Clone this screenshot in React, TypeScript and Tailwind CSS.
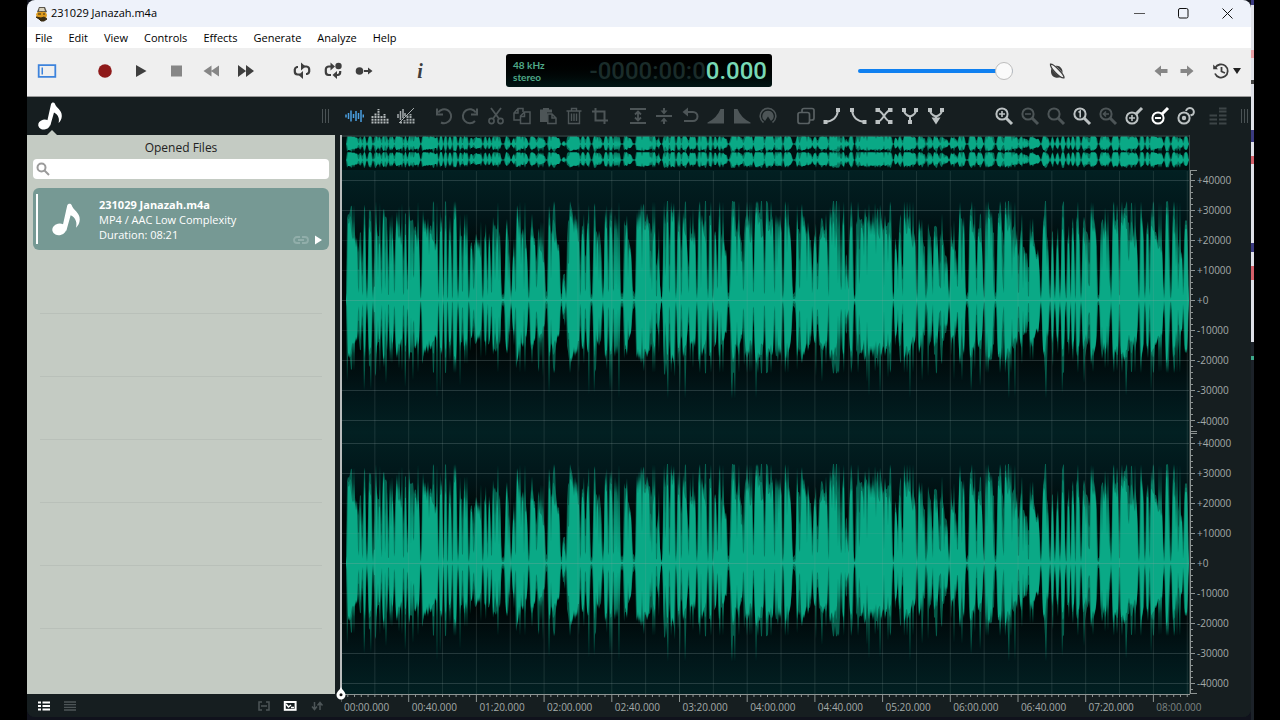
import React from 'react';
import clsx from 'clsx';

const MENU = ['File', 'Edit', 'View', 'Controls', 'Effects', 'Generate', 'Analyze', 'Help'];
const LEVELS = ['+40000', '+30000', '+20000', '+10000', '+0', '-10000', '-20000', '-30000', '-40000'];
const TIMES = [
  '00:00.000', '00:40.000', '01:20.000', '02:00.000', '02:40.000', '03:20.000', '04:00.000',
  '04:40.000', '05:20.000', '06:00.000', '06:40.000', '07:20.000', '08:00.000',
];

const PLOT_WIDTH = 849;
const MAJOR_STEP = 67.7;

// Phrases of speech: start, length, level at the start, level at the end (thousands)
const BURSTS: number[][] = [
  [6, 11, 31, 22], [18, 3, 22, 14], [22, 3, 30, 26], [27, 4, 27, 24], [33, 7, 31, 20], [41, 6, 30, 28],
  [48, 5, 28, 20], [54, 8, 30, 22], [63, 3, 28, 22], [67, 12, 33, 20], [81, 16, 31, 20], [99, 2, 28, 27],
  [103, 3, 30, 29], [108, 2, 26, 20], [112, 4, 33, 31], [118, 3, 28, 24], [122, 5, 27, 22], [129, 3, 24, 18],
  [133, 8, 25, 16], [143, 3, 24, 20], [147, 3, 24, 20], [151, 9, 32, 20], [164, 5, 31, 20], [171, 3, 20, 16],
  [175, 12, 31, 18], [189, 6, 28, 18], [196, 8, 24, 12], [207, 12, 30, 18], [222, 2, 8, 4], [226, 13, 33, 24],
  [240, 4, 28, 20], [245, 4, 29, 22], [252, 9, 30, 20], [263, 4, 29, 26], [268, 4, 28, 24], [273, 6, 32, 22],
  [283, 8, 33, 16], [295, 20, 32, 24], [316, 3, 22, 8], [322, 6, 33, 26], [329, 5, 33, 30], [336, 4, 28, 24],
  [341, 6, 31, 20], [348, 7, 28, 22], [357, 9, 31, 22], [368, 3, 33, 30], [373, 3, 24, 20], [377, 9, 30, 16],
  [389, 13, 32, 22], [403, 9, 32, 22], [413, 10, 33, 24], [424, 9, 32, 26], [434, 7, 28, 26], [443, 8, 33, 22],
  [455, 3, 29, 28], [459, 12, 32, 22], [472, 4, 25, 18], [477, 10, 26, 24], [488, 12, 33, 24], [501, 3, 33, 28],
  [504, 3, 14, 8], [508, 4, 30, 28], [515, 36, 30, 26], [554, 2, 20, 16], [557, 4, 26, 12], [562, 13, 33, 20],
  [577, 7, 27, 20], [586, 5, 32, 18], [592, 6, 24, 18], [599, 8, 26, 12], [609, 7, 24, 16], [617, 7, 32, 28],
  [628, 7, 30, 24], [636, 6, 27, 22], [644, 9, 33, 26], [656, 6, 32, 28], [663, 14, 32, 22], [678, 9, 26, 16],
  [688, 11, 26, 14], [701, 7, 32, 18], [710, 3, 22, 20], [715, 3, 24, 20], [720, 4, 31, 24], [726, 3, 24, 20],
  [731, 2, 26, 24], [735, 4, 30, 28], [741, 7, 26, 22], [749, 7, 32, 24], [759, 10, 30, 22], [771, 7, 32, 28],
  [779, 18, 32, 20], [799, 4, 31, 26], [805, 3, 26, 24], [809, 13, 30, 18], [824, 5, 32, 30], [831, 11, 30, 14],
  [843, 4, 33, 28],
];

interface Layers {
  peak: number[][];
  mid: number[][];
  body: number[][];
}

function buildLayers(seed: number): Layers {
  let state = seed;
  const random = () => {
    state = (state * 1664525 + 1013904223) % 4294967296;
    return state / 4294967296;
  };
  const layers: Layers = { peak: [], mid: [], body: [] };
  for (let x = 5; x < PLOT_WIDTH; x++) {
    const hum = 0.4 + random() * 1.2;
    layers.peak.push([x, hum * 2, hum * 2]);
    layers.mid.push([x, hum, hum]);
    layers.body.push([x, 0.3, 0.3]);
  }
  BURSTS.forEach(([start, length, from, to]) => {
    const tall = Math.floor(random() * Math.min(length, 5));
    for (let i = 0; i <= length; i++) {
      const index = start + i - 5;
      if (index >= layers.peak.length) continue;
      const level = from + ((to - from) * i) / length;
      const edge = length > 2 && (i === 0 || i === length);
      const slit = length > 4 && !edge && random() < 0.2;
      const spike = i === tall || random() < 0.3;
      let body = level * (0.74 + random() * 0.22);
      let peak = Math.min(33, spike ? from * (1 + random() * 0.12) : body * 1.12);
      if (slit) {
        body = 3 + random() * level * 0.5;
        peak = level * (0.8 + random() * 0.2);
      }
      if (edge) {
        body = 1 + random() * 4;
        peak = level * (0.35 + random() * 0.55);
      }
      const mid = (peak + body) / 2;
      const dip = spike && random() < 0.25 ? 1.35 : 1;
      const x = start + i;
      layers.peak[index] = [x, peak, Math.min(33, peak * (spike ? 0.74 : 0.66) * dip)];
      layers.mid[index] = [x, mid, mid * 0.68];
      layers.body[index] = [x, body, body * (slit || edge ? 0.9 : 0.7)];
    }
  });
  return layers;
}

function toPath(points: number[][], center: number, scale: number, limit = 40) {
  const top = points.map(([x, up]) => `${x} ${(center - Math.min(up, limit) * scale).toFixed(1)}`);
  const bottom = points.map(([x, , down]) => `${x} ${(center + Math.min(down, limit) * scale).toFixed(1)}`);
  return `M${top.join('L')}L${bottom.reverse().join('L')}Z`;
}

const LAYERS = buildLayers(11);
const CHANNELS = [
  { top: 35, center: 165 },
  { top: 297, center: 428 },
];

const Waveform: React.FC = () => (
  <svg className="block h-full w-full" viewBox="0 0 849 559" preserveAspectRatio="none" aria-label="Waveform">
    <defs>
      <linearGradient id="channel" x1="0" y1="0" x2="0" y2="1">
        <stop offset="0" stopColor="#022022" />
        <stop offset="0.16" stopColor="#01171a" />
        <stop offset="0.32" stopColor="#000707" />
        <stop offset="0.68" stopColor="#000707" />
        <stop offset="0.84" stopColor="#011518" />
        <stop offset="1" stopColor="#022022" />
      </linearGradient>
    </defs>
    <rect width="849" height="559" fill="#000f10" />
    {CHANNELS.map(({ top, center }) => (
      <g key={top}>
        <rect y={top} width="849" height="262" fill="url(#channel)" />
        <path d={toPath(LAYERS.peak, center, 3)} fill="#0aa986" opacity="0.5" />
        <path d={toPath(LAYERS.mid, center, 3)} fill="#0aa986" opacity="0.45" />
        <path d={toPath(LAYERS.body, center, 3)} fill="#0aa986" />
        {LEVELS.map((level, i) => (
          <path key={level} d={`M0 ${center - 120 + i * 30 + 0.5}H849`} stroke="#8fa5a3" strokeOpacity={i === 4 ? 0.3 : i < 2 || i > 5 ? 0.25 : 0.12} />
        ))}
      </g>
    ))}
    {Array.from({ length: 25 }, (_, i) => (
      <path key={i} d={`M${(i + 1) * (MAJOR_STEP / 2)} 36V559`} stroke="#8fa5a3" strokeOpacity="0.18" />
    ))}
    {/* overview strip of both channels */}
    {[9, 25].map((center) => (
      <g key={center} fill="#0aa986">
        <path d={toPath(LAYERS.peak, center, 0.32, 24)} opacity="0.65" />
        <path d={toPath(LAYERS.body, center, 0.34, 22)} />
      </g>
    ))}
    <path d="M0 1H849" stroke="#4a5756" />
    <path d="M848.5 0V559" stroke="#3b4847" />
  </svg>
);

const LevelAxis: React.FC = () => (
  <div className="flex w-[61px] shrink-0 bg-[#161e20]">
    <svg className="h-full w-[7px] shrink-0" viewBox="0 0 7 559" preserveAspectRatio="none" stroke="#8d9493">
      <path d="M.5 35V559" />
      <path d="M0 35.5H7M0 296.5H7M0 298.5H7M0 558.5H7" />
      {CHANNELS.map(({ center }) =>
        Array.from({ length: 43 }, (_, i) => (
          <path key={`${center}-${i}`} d={`M0 ${center - 126 + i * 6 + 0.5}H${(i - 1) % 5 === 0 ? 5 : 3}`} />
        )),
      )}
    </svg>
    <div className="flex flex-1 flex-col pt-[34px]">
      {CHANNELS.map(({ top }) => (
        <div key={top} className="-my-1 flex flex-1 flex-col text-[10px] text-[#a3aaa9]">
          {LEVELS.map((level) => (
            <span key={level} className="flex flex-1 items-center leading-none">{level}</span>
          ))}
        </div>
      ))}
    </div>
  </div>
);

const TimeAxis: React.FC = () => (
  <div className="flex h-[23px] shrink-0 bg-[#161e20] pl-[6px] pr-[61px]">
    <div className="flex flex-1 flex-col">
      <svg className="block h-[8px] w-full" viewBox="0 0 849 8" preserveAspectRatio="none" stroke="#8d9493">
        <path d="M0 .5H849" />
        {Array.from({ length: 126 }, (_, i) => (
          <path key={i} d={`M${(i * MAJOR_STEP) / 10} 0V${i % 10 === 0 ? 8 : 3}`} />
        ))}
      </svg>
      <div className="flex text-[10px] leading-[10px] text-[#a3aaa9]">
        {TIMES.map((time, i) => (
          <span
            key={time}
            className={clsx('shrink-0 pl-[3px] whitespace-nowrap', i === 12 && 'text-[#7d8584]')}
            style={{ width: `${(MAJOR_STEP / PLOT_WIDTH) * 100}%` }}
          >
            {time}
          </span>
        ))}
      </div>
    </div>
  </div>
);

interface ToolProps {
  label: string;
  className?: string;
  children: React.ReactNode;
}

// Editing tools are all drawn on a 20x20 grid
const Tool: React.FC<ToolProps> = ({ label, className = 'text-[#4d5557]', children }) => (
  <button type="button" aria-label={label} className={clsx('flex h-full w-[26px] shrink-0 items-center justify-center', className)}>
    <svg className="h-5 w-5" viewBox="0 0 20 20" fill="none" stroke="currentColor" strokeWidth="2">
      {children}
    </svg>
  </button>
);

const Transport: React.FC<ToolProps> = ({ label, className = 'text-[#3e3e3e]', children }) => (
  <button type="button" aria-label={label} className={clsx('flex h-8 shrink-0 items-center justify-center', className)}>
    <svg className="h-5 w-5" viewBox="0 0 20 20" fill="currentColor">
      {children}
    </svg>
  </button>
);

const Lens: React.FC = () => (
  <>
    <circle cx="8" cy="8" r="5.6" />
    <path d="M12 12L18 18" strokeWidth="3" />
  </>
);

const Note: React.FC<{ className: string }> = ({ className }) => (
  <svg className={className} viewBox="0 0 24 28" fill="currentColor">
    <ellipse cx="6.2" cy="22.5" rx="6" ry="5" transform="rotate(-14 6.2 22.5)" />
    <path d="M8.600 22L13 2.200C13.600 .2 16 .1 16.800 1.600C18 6 24 8 23.800 14C23.700 17 22.400 19.400 20.600 21C21.600 17 20.600 12.600 16 10.400L12.300 23.600Z" />
  </svg>
);

const Grip: React.FC = () => (
  <svg className="h-[14px] w-[9px] shrink-0" viewBox="0 0 9 14" stroke="#4a5254">
    <path d="M1.5 0V14M4.5 0V14M7.5 0V14" />
  </svg>
);

const TitleBar: React.FC = () => (
  <header className="flex h-[27px] shrink-0 items-center bg-[#eef2fa] pl-2 text-black">
    <svg className="h-4 w-[13px]" viewBox="0 0 13 16">
      <path d="M2 6L4 1H10L12 6L9 7H4Z" fill="#5b564b" />
      <path d="M4.5 2H9L10 5H4Z" fill="#d9d2bd" />
      <path d="M1 8Q3 5 6.500 6Q11 5 12 9L11 13L7 14L2 12Z" fill="#dd9a1c" />
      <path d="M3 8H6M8 8H10M1 11L4 13L6 15H9L12 13L9 11L6 12Z" stroke="#3a2c12" fill="#3a2c12" />
    </svg>
    <h1 className="pl-[3px] text-[11px]">231029 Janazah.m4a</h1>
    <div className="ml-auto flex h-full pr-[2px]">
      <button type="button" aria-label="Minimize" className="flex w-11 items-center justify-center">
        <svg className="h-[11px] w-[11px]" viewBox="0 0 11 11" stroke="#555"><path d="M0 5.5H11" /></svg>
      </button>
      <button type="button" aria-label="Maximize" className="flex w-11 items-center justify-center">
        <svg className="h-[11px] w-[11px]" viewBox="0 0 11 11" fill="none" stroke="#111"><rect x=".5" y=".5" width="9.500" height="9.500" rx="1.500" /></svg>
      </button>
      <button type="button" aria-label="Close" className="flex w-11 items-center justify-center">
        <svg className="h-[11px] w-[11px]" viewBox="0 0 11 11" stroke="#111"><path d="M.5 .5L10.500 10.500M10.500 .5L.5 10.500" /></svg>
      </button>
    </div>
  </header>
);

const PlaybackBar: React.FC = () => (
  <div className="grid h-[49px] shrink-0 grid-cols-[1fr_auto_1fr] items-center border-b border-[#9a9a9a] bg-[#efefef] pb-[3px]">
    <div className="flex items-center pl-[10px]">
      <Transport label="Toggle side panel" className="mr-[38px] text-[#3d83dc]">
        <path d="M1.700 4.200H18.300V15.800H1.700Z" fill="none" stroke="currentColor" strokeWidth="1.800" />
        <path d="M4.500 6.500H6V13.500H4.500Z" />
      </Transport>
      <div className="flex gap-[15px]">
        <Transport label="Record" className="text-[#8f1a1a]"><circle cx="10" cy="10" r="6.800" /></Transport>
        <Transport label="Play"><path d="M6 4L16.500 10L6 16Z" /></Transport>
        <Transport label="Stop" className="text-[#868686]"><path d="M6 4.500H17V15.500H6Z" /></Transport>
        <Transport label="Rewind" className="text-[#868686]"><path d="M11.500 4.500V15.500L3.500 10ZM19 4.500V15.500L11 10Z" /></Transport>
        <Transport label="Fast forward"><path d="M3 4V16L11 10ZM11 4V16L19 10Z" /></Transport>
      </div>
      <div className="ml-[37px] flex gap-[11px]">
        <Transport label="Loop">
          <path d="M6 6.500H5A3 3 0 0 0 2.800 9V11A3 3 0 0 0 5.500 14H8M14 13.500H15A3 3 0 0 0 17.200 11V9A3 3 0 0 0 14.500 6H11" fill="none" stroke="currentColor" strokeWidth="2.200" transform="translate(0 -.5)" />
          <path d="M11 1.500L6.500 5.500L11 9.500ZM9 10L13.500 14L9 18Z" transform="matrix(-1 0 0 1 20 0)" />
        </Transport>
        <Transport label="Loop selection">
          <path d="M9 5.500H6A3 3 0 0 0 2.800 8.500V11A3 3 0 0 0 5.500 14H8M14 14H15A3 3 0 0 0 17.200 11V10" fill="none" stroke="currentColor" strokeWidth="2.200" />
          <path d="M7.500 1.500L12 5.500L7.500 9.500ZM14 10L9.500 14L14 18Z" />
          <circle cx="15.500" cy="5" r="3.200" />
        </Transport>
        <Transport label="Play from cursor">
          <circle cx="5.500" cy="10" r="3.800" />
          <path d="M10 9H14V6.500L18.500 10L14 13.500V11H10Z" />
        </Transport>
      </div>
      <button type="button" aria-label="File information" className="ml-9 w-5 font-['Liberation_Serif',serif] text-[20px] leading-5 font-bold text-[#3e3e3e] italic">i</button>
    </div>
    <div className="flex h-[33px] w-[266px] items-center justify-between rounded-[3px] bg-linear-to-b from-black to-[#011514] pr-[5px] pl-[7px]">
      <div className="flex flex-col font-[Lato,sans-serif] text-[10px] leading-[12px] font-bold text-[#4fa988]">
        <span>48 kHz</span>
        <span>stereo</span>
      </div>
      <div className="font-[Roboto,sans-serif] text-[24px] leading-6 font-medium text-[#1a2c2a]">
        -0000:00:0<span className="text-[#78d8b5]">0.000</span>
      </div>
    </div>
    <div className="flex items-center pl-[86px] pr-[10px]">
      <input
        type="range"
        aria-label="Volume"
        defaultValue={100}
        className="h-[4px] w-[155px] appearance-none rounded-full bg-[#0f80f0] [&::-webkit-slider-thumb]:h-[18px] [&::-webkit-slider-thumb]:w-[18px] [&::-webkit-slider-thumb]:appearance-none [&::-webkit-slider-thumb]:rounded-full [&::-webkit-slider-thumb]:border [&::-webkit-slider-thumb]:border-[#bdbdbd] [&::-webkit-slider-thumb]:bg-[#fafafa]"
      />
      <div className="pl-[34px]">
        <Transport label="Audio unit">
          <path d="M3.500 3.200C7 3 17.500 13.500 17 16.800C13 17.500 2.800 7 3.500 3.200Z" fill="none" stroke="currentColor" strokeWidth="1.300" />
          <path d="M4.600 7.500C3 11 4.500 15.500 8.500 16.500C10.500 17 12.500 16.500 14 16C10.500 14.500 6.500 11 4.600 7.500Z" />
          <path d="M8.500 5C12 3.800 16.300 7.500 15.500 12C13.500 9 11.500 7 8.500 5Z" />
        </Transport>
      </div>
      <div className="ml-auto flex items-center gap-[6px]">
        <Transport label="Back" className="text-[#868686]"><path d="M3.500 10L10 4.500V8H16.500V12H10V15.500Z" /></Transport>
        <Transport label="Forward" className="text-[#868686]"><path d="M16.500 10L10 4.500V8H3.500V12H10V15.500Z" /></Transport>
        <button type="button" aria-label="History" className="ml-2 flex items-center gap-[2px] text-[#3e3e3e]">
          <svg className="h-5 w-5" viewBox="0 0 20 20" fill="none" stroke="currentColor" strokeWidth="1.800">
            <path d="M4.200 7A6.600 6.600 0 1 1 4 12.500M10.500 6V10.500L14 12" />
            <path d="M2.200 3.500V8.300H7Z" fill="currentColor" stroke="none" />
          </svg>
          <svg className="h-[6px] w-2" viewBox="0 0 8 6" fill="#222"><path d="M0 0H8L4 6Z" /></svg>
        </button>
      </div>
    </div>
  </div>
);

const EditBar: React.FC = () => (
  <div className="flex h-[38px] shrink-0 items-center bg-[#161e20] pl-[6px]">
    <div className="flex h-full">
      <Tool label="Waveform view" className="text-[#4a9fe0]">
        <path d="M2 8.500V11.500M4.500 7V13M7 4.500V15.500M9.500 8V12M12 5V15M14.500 7V13M17 4V16M19.300 8.500V11.500" strokeWidth="1.500" />
      </Tool>
      <Tool label="Spectrum view" className="text-[#b4babb]">
        <path d="M2.500 17.500V10M5.500 17.500V7M8.500 17.500V3M11.500 17.500V10M14.500 17.500V8M17.500 17.500V12" strokeDasharray="2 .7" />
      </Tool>
      <Tool label="Mixed view" className="text-[#a4abac]">
        <path d="M2 8V12M4.500 5V14M7 3V12M9 7V10" strokeWidth="1.500" />
        <path d="M8.500 17.500V14M11.500 17.500V9M14.500 17.500V8M17.500 17.500V12M5 17.500V15" strokeDasharray="2 .7" />
        <path d="M3 17L18 2" strokeWidth="1" />
      </Tool>
    </div>
    <div className="ml-3 flex h-full">
      <Tool label="Undo"><path d="M4.200 6.500A7 7 0 1 1 7 16.500" /><path d="M3 2.500V8.500H9" /></Tool>
      <Tool label="Redo"><path d="M15.800 6.500A7 7 0 1 0 15 15" /><path d="M17 2.500V8.500H11" /></Tool>
      <Tool label="Cut">
        <circle cx="5.500" cy="15" r="2.600" strokeWidth="1.600" />
        <circle cx="14.500" cy="15" r="2.600" strokeWidth="1.600" />
        <path d="M5 2L13 12.800M15 2L7 12.800" strokeWidth="1.800" />
      </Tool>
      <Tool label="Copy">
        <path d="M8 14H2V7L6 2.500H11V6M6 3V7H2" strokeWidth="1.500" />
        <path d="M8.500 17.500V10L12.500 6H18V17.500ZM12.500 6V10.500H8.500" strokeWidth="1.500" />
      </Tool>
      <Tool label="Paste">
        <path d="M2 3.500H14V6.500H9V16H2Z" fill="currentColor" stroke="none" />
        <path d="M5 2H11V4H5Z" fill="currentColor" stroke="none" />
        <path d="M9.800 8H14L18 12V17.500H9.800ZM14 8V12H18" strokeWidth="1.500" />
      </Tool>
      <Tool label="Delete">
        <path d="M2.500 5H17.500M7.500 5V2.500H12.500V5M4.500 5V17.500H15.500V5M7.500 7.500V15M10 7.500V15M12.500 7.500V15" strokeWidth="1.400" />
      </Tool>
      <Tool label="Crop"><path d="M5.500 2V14.500H18M2 5.500H14.500V18" /></Tool>
    </div>
    <div className="ml-3 flex h-full">
      <Tool label="Normalize">
        <path d="M2 3H18M2 17H18" />
        <path d="M10 6V14M7 8.500L10 5.500L13 8.500M7 11.500L10 14.500L13 11.500" strokeWidth="1.800" />
      </Tool>
      <Tool label="Compress">
        <path d="M2 10H18M10 2V6M10 14V18" />
        <path d="M6.500 4.500H13.500L10 8.500ZM6.500 15.500H13.500L10 11.500Z" fill="currentColor" stroke="none" />
      </Tool>
      <Tool label="Reverse">
        <path d="M6 6H13A4.500 4.500 0 0 1 13 15H4" />
        <path d="M8 1.500V10.500L2.500 6Z" fill="currentColor" stroke="none" />
      </Tool>
      <Tool label="Fade in"><path d="M1.500 17.500V16.500Q11 12 14.500 3H18V17.500Z" fill="currentColor" stroke="none" /></Tool>
      <Tool label="Fade out"><path d="M18.500 17.500V16.500Q9 12 5.500 3H2V17.500Z" fill="currentColor" stroke="none" /></Tool>
      <Tool label="Gain">
        <path d="M5.500 16.500A7.800 7.800 0 1 1 14.500 16.500" strokeWidth="1.600" />
        <path d="M10 4.800A5.500 5.500 0 0 0 7 15L10 10.500L13 15A5.500 5.500 0 0 0 10 4.800Z" fill="currentColor" stroke="none" />
      </Tool>
    </div>
    <div className="ml-3 flex h-full">
      <Tool label="Duplicate" className="text-[#596163]">
        <rect x="2" y="6.500" width="11.500" height="11" rx="2" strokeWidth="1.700" />
        <path d="M6 6V4.500A2 2 0 0 1 8 2.500H16A2 2 0 0 1 18 4.500V12A2 2 0 0 1 16 14H14" strokeWidth="1.700" />
      </Tool>
      <Tool label="Fade curve in" className="text-[#bcc2c3]">
        <path d="M3 16Q15 15 16 4" />
        <path d="M1.500 14H5.500V18H1.500ZM14 2H18V6H14Z" fill="currentColor" stroke="none" />
      </Tool>
      <Tool label="Fade curve out" className="text-[#bcc2c3]">
        <path d="M4 4Q5 15 17 16" />
        <path d="M2 2H6V6H2ZM14.500 14H18.500V18H14.500Z" fill="currentColor" stroke="none" />
      </Tool>
      <Tool label="Crossfade" className="text-[#bcc2c3]">
        <path d="M3 4C9 4 11 16 17 16M17 4C11 4 9 16 3 16" />
        <path d="M1.500 2H6V6H1.500ZM14 2H18.500V6H14ZM1.500 14H6V18H1.500ZM14 14H18.500V18H14Z" fill="currentColor" stroke="none" />
      </Tool>
      <Tool label="Merge" className="text-[#bcc2c3]">
        <path d="M4 4Q4 8.500 10 10.500Q16 8.500 16 4M10 10V17" />
        <path d="M2 2H6V6H2ZM14 2H18V6H14ZM8 14H12V18H8Z" fill="currentColor" stroke="none" />
      </Tool>
      <Tool label="Mix down" className="text-[#bcc2c3]">
        <path d="M4 4Q4 8.500 10 10.500Q16 8.500 16 4M10 10V14" />
        <path d="M2 2H6V6H2ZM14 2H18V6H14ZM5.500 11.500H14.500L10 18.500Z" fill="currentColor" stroke="none" />
      </Tool>
    </div>
    <div className="ml-auto flex h-full">
      <Tool label="Zoom in" className="text-[#bcc2c3]"><Lens /><path d="M5 8H11M8 5V11" strokeWidth="1.600" /></Tool>
      <Tool label="Zoom out"><Lens /><path d="M5 8H11" strokeWidth="1.600" /></Tool>
      <Tool label="Zoom selection"><Lens /></Tool>
      <Tool label="Zoom to original" className="text-[#bcc2c3]"><Lens /><path d="M6.500 6.300L8.200 5V11.500" strokeWidth="1.600" /></Tool>
      <Tool label="Zoom back"><Lens /><path d="M11 8H6M8 5.500L5.500 8L8 10.500" strokeWidth="1.600" /></Tool>
      <Tool label="Vertical zoom in" className="text-[#bcc2c3]">
        <circle cx="8" cy="12" r="5.600" /><path d="M12 8L18 2" strokeWidth="3" /><path d="M5 12H11M8 9V15" strokeWidth="1.600" />
      </Tool>
      <Tool label="Vertical zoom out" className="text-white">
        <circle cx="8" cy="12" r="5.600" /><path d="M12 8L18 2" strokeWidth="3" /><path d="M5 12H11" />
      </Tool>
      <Tool label="Auto zoom" className="text-[#bcc2c3]">
        <circle cx="8" cy="12" r="5.600" />
        <circle cx="8" cy="12" r="2.200" fill="currentColor" stroke="none" />
        <path d="M10 5A4 4 0 1 1 17 8.500L14.500 9.500" />
      </Tool>
    </div>
    <div className="mr-[9px] ml-[6px] flex h-full">
      <Tool label="Levels" className="text-[#3d4547]">
        <path d="M1.500 17.500H9M1.500 13.500H9M1.500 9.500H9M11 17.500H18.500M11 13.500H18.500M11 9.500H18.500M11 5.500H18.500M11 2.500H18.500" />
      </Tool>
    </div>
    <Grip />
    <div className="w-[2px]" />
  </div>
);

const SidePanel: React.FC = () => (
  <aside className="flex w-[308px] shrink-0 flex-col">
    <div className="relative flex h-[38px] shrink-0 items-center justify-between bg-[#161e20] pl-[11px] pr-[5px]">
      <button type="button" aria-label="Opened files" className="text-white">
        <Note className="h-7 w-6" />
      </button>
      <Grip />
      <svg className="absolute bottom-0 left-5 h-[5px] w-[10px]" viewBox="0 0 10 5" fill="#c4cbc3"><path d="M0 5L5 0L10 5Z" /></svg>
    </div>
    <div className="flex min-h-0 flex-1 flex-col overflow-hidden bg-[#c4cbc3] px-[6px]">
      <h2 className="h-6 shrink-0 text-center text-[12px] leading-[25px] text-[#222]">Opened Files</h2>
      <label className="flex h-5 shrink-0 items-center rounded-[4px] bg-white pl-[3px]">
        <svg className="h-[14px] w-[14px]" viewBox="0 0 14 14" fill="none" stroke="#9b9b9b" strokeWidth="2">
          <circle cx="5.500" cy="5.500" r="4" />
          <path d="M8.500 8.500L13 13" />
        </svg>
        <input type="text" aria-label="Search files" className="min-w-0 flex-1 bg-transparent px-1 text-[12px] outline-none" />
      </label>
      <ul className="mt-[9px]">
        <li className="mb-px flex h-[62px] items-center rounded-[6px] bg-[#769994] pr-[7px] pl-[3px] text-white">
          <div className="h-[50px] w-[2px] bg-white" />
          <Note className="ml-[14px] h-[33px] w-7" />
          <div className="ml-[19px] flex-1 text-[11px] leading-[15px]">
            <p className="font-bold">231029 Janazah.m4a</p>
            <p>MP4 / AAC Low Complexity</p>
            <p>Duration: 08:21</p>
          </div>
          <div className="flex items-center gap-[6px] self-end pb-1">
            <svg className="h-[10px] w-4" viewBox="0 0 16 10" fill="none" stroke="#91aeaa" strokeWidth="1.800">
              <path d="M7 2H4A3 3 0 0 0 4 8H7M9 2H12A3 3 0 0 1 12 8H9M5 5H11" />
            </svg>
            <button type="button" aria-label="Play file">
              <svg className="h-3 w-[7px]" viewBox="0 0 7 12" fill="white"><path d="M0 1.500L7 6L0 10.500Z" /></svg>
            </button>
          </div>
        </li>
        {Array.from({ length: 6 }, (_, i) => (
          <li key={i} className="mx-[7px] h-[63px] border-b border-[#b9c0b9]" />
        ))}
      </ul>
    </div>
    <div className="flex h-[23px] shrink-0 items-center bg-[#161e20] pr-[5px] pl-1 text-[#596163]">
      <Tool label="Detailed list" className="text-white">
        <path d="M4 6.500H7M4 10H7M4 13.500H7M8.500 6.500H16M8.500 10H16M8.500 13.500H16" />
      </Tool>
      <Tool label="Compact list"><path d="M4 6H16M4 8.700H16M4 11.400H16M4 14H16" strokeWidth="1.300" /></Tool>
      <div className="ml-auto flex h-full">
        <Tool label="Link files"><path d="M7 6H4V14H7M11 6H14V14H11M6 10H12" strokeWidth="1.500" /></Tool>
        <Tool label="Show previews" className="text-white">
          <rect x="3.800" y="6" width="10.800" height="7.800" />
          <path d="M5 8L7.500 11L10 9M10 11.500H13" strokeWidth="1.600" />
        </Tool>
        <Tool label="Sort"><path d="M7.500 6V13M5 10.500L7.500 13.500L10 10.500M13 14V7M10.500 9.500L13 6.500L15.500 9.500" strokeWidth="1.500" /></Tool>
      </div>
    </div>
  </aside>
);

export default function App() {
  return (
    <div className="flex h-screen bg-black pr-[26px] pl-[27px] font-['Open_Sans','Noto_Sans',sans-serif]">
      <div className="flex min-w-0 flex-1 flex-col bg-[#10121c] pb-[3px]">
        <div className="flex min-h-0 flex-1 flex-col overflow-hidden rounded-lg bg-[#161e20]">
          <TitleBar />
          <nav className="flex h-[21px] shrink-0 items-center gap-4 bg-white pt-px pl-2 text-[11px] text-black">
            {MENU.map((item) => (
              <button key={item} type="button">{item}</button>
            ))}
          </nav>
          <PlaybackBar />
          <main className="flex min-h-0 flex-1">
            <SidePanel />
            <section className="flex min-w-0 flex-1 flex-col">
              <EditBar />
              <div className="flex min-h-0 flex-1">
                <div className="relative min-w-0 flex-1 pl-[6px]">
                  <Waveform />
                  {/* play head */}
                  <div className="absolute top-0 bottom-0 left-[5px] w-[2px] bg-[#b9bdbd]" />
                  <svg className="absolute -bottom-[6px] left-px h-[13px] w-[10px]" viewBox="0 0 10 13">
                    <path d="M5 0C6 3 9.500 4.500 9.500 8A4.500 4.500 0 0 1 .5 8C.5 4.500 4 3 5 0Z" fill="white" />
                    <circle cx="5" cy="7.800" r="1.500" fill="#111" />
                  </svg>
                </div>
                <LevelAxis />
              </div>
              <TimeAxis />
            </section>
          </main>
        </div>
      </div>
      <div className="flex w-[3px] shrink-0 flex-col bg-[#1c2229]">
        <div className="h-[5px] bg-[#3a3a80]" />
        <div className="h-[45px] bg-[#dfe1e8]" />
        <div className="h-[8px] bg-[#e8a0a6]" />
        <div className="h-[22px] bg-[#dfe1e8]" />
        <div className="h-[4px] bg-[#444]" />
        <div className="h-[46px] bg-[#dfe1e8]" />
        <div className="h-[12px] bg-[#3a3a80]" />
        <div className="h-[14px] bg-[#dfe1e8]" />
        <div className="h-[8px] bg-[#d5606a]" />
        <div className="h-[79px] bg-[#dfe1e8]" />
        <div className="h-[9px] bg-[#3a3a80]" />
        <div className="h-[14px] bg-[#dfe1e8]" />
        <div className="h-[14px] bg-[#d5606a]" />
        <div className="h-[62px] bg-[#dfe1e8]" />
        <div className="mt-[14px] h-[4px] bg-[#3faa8c]" />
      </div>
    </div>
  );
}
